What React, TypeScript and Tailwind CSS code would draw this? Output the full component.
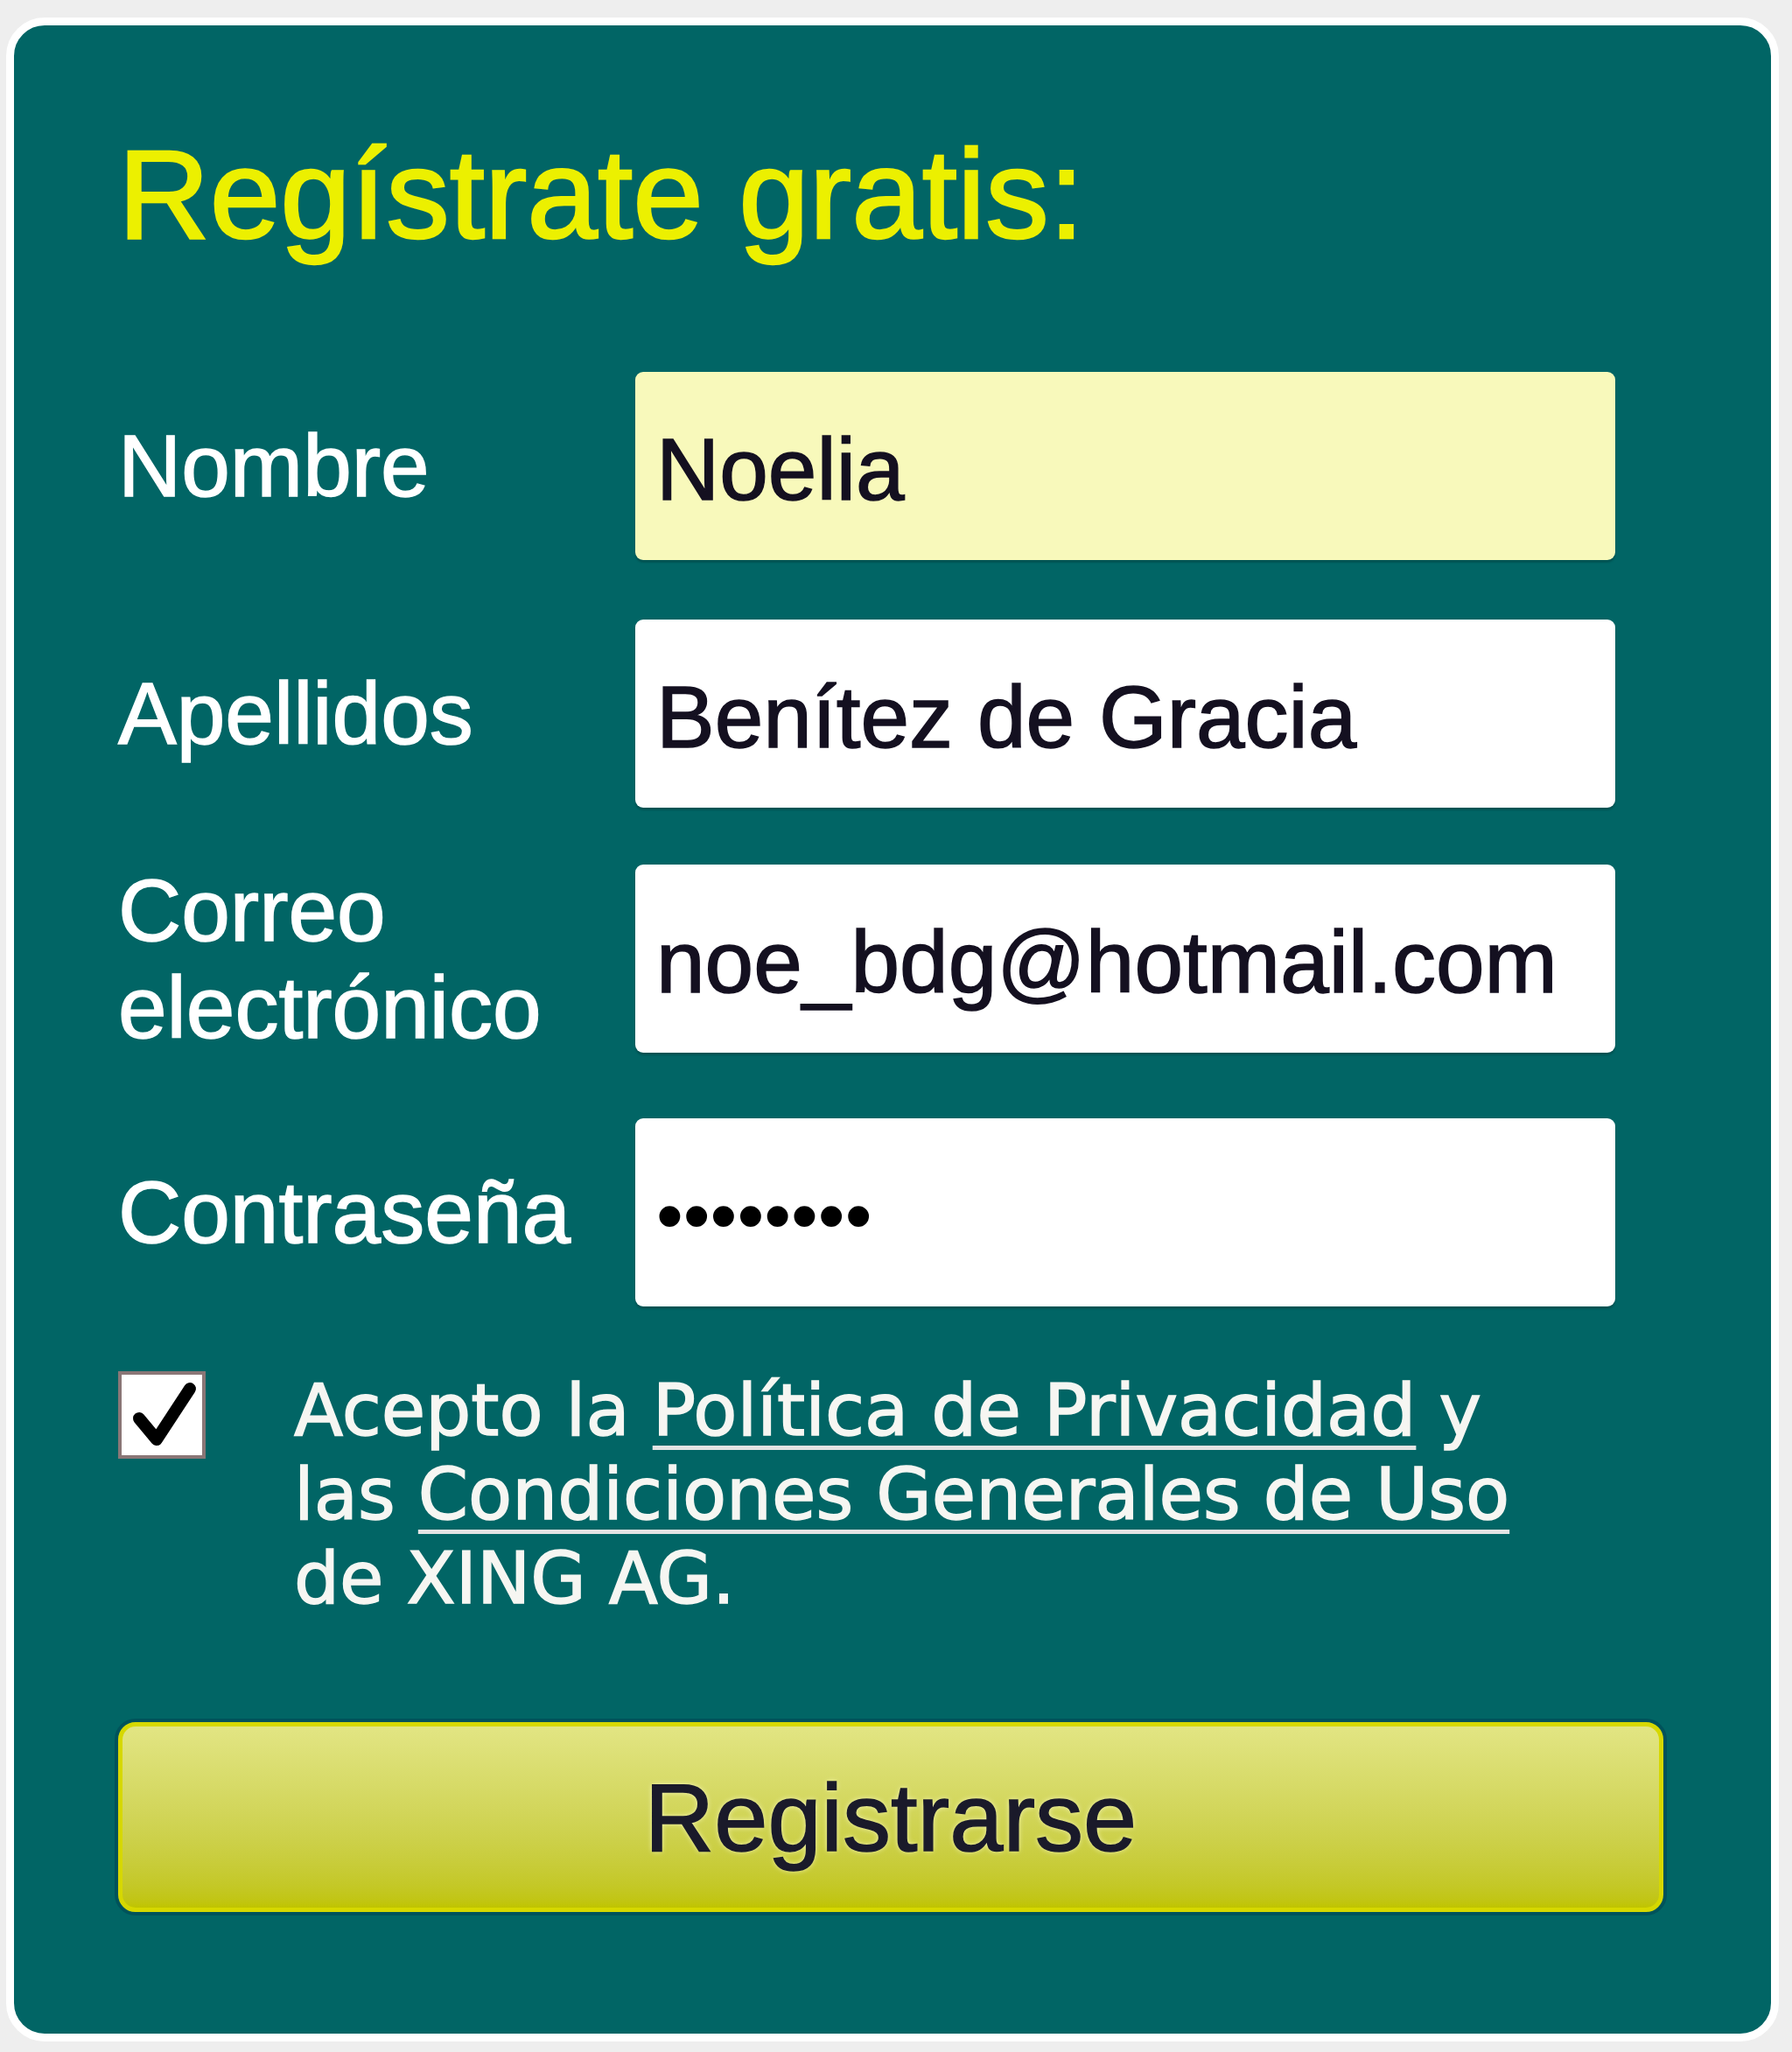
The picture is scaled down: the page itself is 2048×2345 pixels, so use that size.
import type { ReactNode } from 'react';

const sans = '"Liberation Sans", Arial, sans-serif';
const verdana = '"DejaVu Sans", Verdana, sans-serif';

function Row({ label, children, className }: { label: ReactNode; children: ReactNode; className?: string }) {
  return (
    <div className={`flex h-[215px] items-center ${className ?? ''}`}>
      <div className="w-[591px] shrink-0 text-[100px] leading-[111px] text-white">{label}</div>
      {children}
    </div>
  );
}

function Field({ value, filled }: { value: ReactNode; filled?: boolean }) {
  return (
    <div
      className={`flex h-[215px] w-[1120px] items-center rounded-[9px] pl-[24px] pt-[6px] text-[100px] text-[#141020] shadow-[0_3px_2px_rgba(0,0,0,0.18)] ${filled ? 'bg-[#f8f9bb]' : 'bg-white'}`}
    >
      {value}
    </div>
  );
}

export default function App() {
  return (
    <div
      className="min-h-[2345px] w-[2048px] bg-[#eeeeee] pl-[7px] pt-[20px] [-webkit-text-stroke-width:1.5px]"
      style={{ fontFamily: sans }}
    >
      <div className="h-[2313px] w-[2026px] rounded-[44px] border-[9px] border-white bg-[#016565] pl-[119px] pt-[110px]">
        <h1 className="text-[145px] leading-[166px] font-normal text-[#ecf000] [-webkit-text-stroke-width:2.5px]">
          Regístrate gratis:
        </h1>

        <div className="mt-[120px] flex flex-col">
          <Row label="Nombre">
            <Field value="Noelia" filled />
          </Row>
          <Row label="Apellidos" className="mt-[68px]">
            <Field value="Benítez de Gracia" />
          </Row>
          <Row
            label={
              <>
                Correo
                <br />
                electrónico
              </>
            }
            className="mt-[65px]"
          >
            <Field value="noe_bdg@hotmail.com" />
          </Row>
          <Row label="Contraseña" className="mt-[75px]">
            <Field value={<span className="text-[88px] text-black [-webkit-text-stroke-width:0px]">••••••••</span>} />
          </Row>
        </div>

        <div className="mt-[71px] flex items-start">
          <div className="mt-[3px] h-[100px] w-[100px] shrink-0 border-[4px] border-[#8a7676] bg-white">
            <svg viewBox="0 0 92 92" className="h-full w-full">
              <path d="M20 50 L40 74 L78 16" fill="none" stroke="#000" strokeWidth="14" strokeLinecap="round" strokeLinejoin="round" />
            </svg>
          </div>
          <p
            className="ml-[101px] w-[1420px] text-[82px] leading-[96px] text-[#f6f6f2] [-webkit-text-stroke-width:1.5px]"
            style={{ fontFamily: verdana }}
          >
            Acepto la{' '}
            <a className="underline decoration-[#e4e4e4] decoration-[5px] underline-offset-[12px]">Política de Privacidad</a> y las{' '}
            <a className="underline decoration-[#e4e4e4] decoration-[5px] underline-offset-[12px]">Condiciones Generales de Uso</a> de
            XING AG.
          </p>
        </div>

        <button
          type="button"
          className="mt-[116px] flex h-[217px] w-[1766px] items-center justify-center rounded-[20px] border-[5px] border-[#d6d800] bg-gradient-to-b from-[#e2e583] to-[#c0c400] text-[110px] text-[#1a1a2a] shadow-[0_0_0_4px_#00525a] [text-shadow:0_0_6px_rgba(255,255,210,0.9)]"
        >
          Registrarse
        </button>
      </div>
    </div>
  );
}
